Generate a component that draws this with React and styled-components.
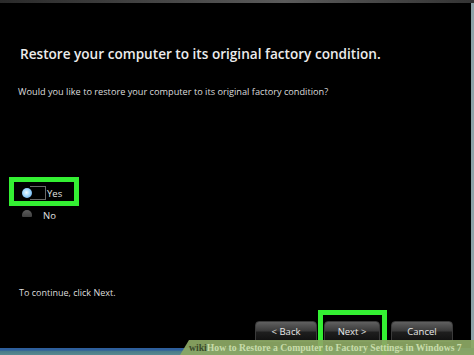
import React from "react";
import styled, { createGlobalStyle } from "styled-components";

const Global = createGlobalStyle`
  html, body {
    margin: 0;
    padding: 0;
    background: #000;
  }
  body {
    width: 474px;
    height: 355px;
    overflow: hidden;
    font-family: "Open Sans", "DejaVu Sans", sans-serif;
  }
`;

// styled components
const Screen = styled.div`
  position: relative;
  width: 474px;
  height: 355px;
  background: #000;
  display: flex;
  flex-direction: column;
  overflow: hidden;
`;

const TopStrip = styled.div`
  height: 3px;
  background: linear-gradient(90deg, #2a2a2a, #4a4a4a 40%, #5a5a5a 60%, #333 100%);
`;

const Body = styled.div`
  flex: 1;
  display: flex;
  border-right: 3px solid #8fa3a8;
`;

const Content = styled.div`
  flex: 1;
  display: flex;
  flex-direction: column;
  padding: 42px 0 0 20px;
  color: #ececec;
`;

const Title = styled.h1`
  margin: 0;
  font-size: 13.6px;
  font-weight: 600;
  line-height: 18px;
`;

const Question = styled.p`
  margin: 22px 0 0 -2px;
  font-size: 9.2px;
  line-height: 13px;
  color: #dcdcdc;
`;

const Options = styled.div`
  margin-top: 88px;
  display: flex;
  flex-direction: column;
  gap: 8px;
`;

const Option = styled.div`
  display: flex;
  align-items: center;
  height: 14px;
  font-size: 9.5px;
  color: #e0e0e0;
  padding-left: 2px;
`;

const Radio = styled.span`
  flex: none;
  width: 10px;
  height: ${(p) => (p.checked ? 10 : 7)}px;
  border-radius: ${(p) => (p.checked ? "50%" : "5px 5px 1px 1px")};
  align-self: ${(p) => (p.checked ? "center" : "flex-start")};
  margin-top: ${(p) => (p.checked ? 0 : 2)}px;
  background: ${(p) =>
    p.checked
      ? "radial-gradient(circle at 45% 45%, #f0faff 0%, #a8dcff 40%, #4a98e0 100%)"
      : "linear-gradient(180deg, #5c5c5c 0%, #404040 100%)"};
`;

const FocusBox = styled.span`
  flex: none;
  width: 15px;
  height: 12px;
  margin-left: -2px;
  border: 1px solid #6a6a6a;
  border-left: none;
`;

const Label = styled.span`
  margin-left: ${(p) => p.offset}px;
`;

const Highlight = styled.div`
  position: absolute;
  border: 5px solid #34f033;
  box-sizing: border-box;
  pointer-events: none;
`;

const Footer = styled.div`
  margin-top: auto;
  display: flex;
  flex-direction: column;
`;

const Hint = styled.p`
  margin: 0 0 22px -1px;
  font-size: 9px;
  color: #dedede;
`;

const Buttons = styled.div`
  display: flex;
  justify-content: flex-end;
  gap: 7px;
  padding-right: 18px;
  margin-bottom: 6px;
`;

const Button = styled.button`
  width: ${(p) => p.w || 62}px;
  height: 21px;
  margin-left: ${(p) => p.gapLeft || 0}px;
  border: 1px solid #3a3a3a;
  border-radius: 4px 4px 2px 2px;
  background: linear-gradient(180deg, #606060 0%, #3c3c3c 45%, #1e1e1e 55%, #111 100%);
  color: #e8e8e8;
  font-family: "Open Sans", "DejaVu Sans", sans-serif;
  font-size: 9.5px;
  padding: 0;
`;

const BottomLine = styled.div`
  height: 7px;
  background: linear-gradient(180deg, #2e5f9c 0%, #2e5f9c 30%, #4a7c8a 50%, #5a8a90 100%);
`;

const Watermark = styled.div`
  position: absolute;
  left: 180px;
  right: 0;
  bottom: 0;
  height: 15px;
  background: rgba(140, 168, 100, 0.93);
  clip-path: polygon(9px 0, 100% 0, 100% 100%, 0 100%);
  display: flex;
  align-items: center;
  padding-left: 9px;
  font-family: "Liberation Serif", serif;
  font-size: 9.7px;
  font-weight: 700;
  color: #c8dcaa;
  white-space: nowrap;
`;

const Wiki = styled.span`
  color: #3a4a2a;
`;

const App = () => {
  return (
    <>
      <Global />
      <Screen>
        <TopStrip />
        <Body>
          <Content>
            <Title>Restore your computer to its original factory condition.</Title>
            <Question>
              Would you like to restore your computer to its original factory condition?
            </Question>
            <Options>
              <Option>
                <Radio checked />
                <FocusBox />
                <Label offset={1}>Yes</Label>
              </Option>
              <Option>
                <Radio />
                <Label offset={11}>No</Label>
              </Option>
            </Options>
            <Footer>
              <Hint>To continue, click Next.</Hint>
              <Buttons>
                <Button>&lt; Back</Button>
                <Button w={56}>Next &gt;</Button>
                <Button gapLeft={4}>Cancel</Button>
              </Buttons>
            </Footer>
          </Content>
        </Body>
        <BottomLine />
        <Highlight style={{ left: 9, top: 177, width: 70, height: 29 }} />
        <Highlight style={{ left: 318, top: 310, width: 69, height: 50 }} />
        <Watermark>
          <Wiki>wiki</Wiki>How to Restore a Computer to Factory Settings in Windows 7
        </Watermark>
      </Screen>
    </>
  );
};

export default App;
